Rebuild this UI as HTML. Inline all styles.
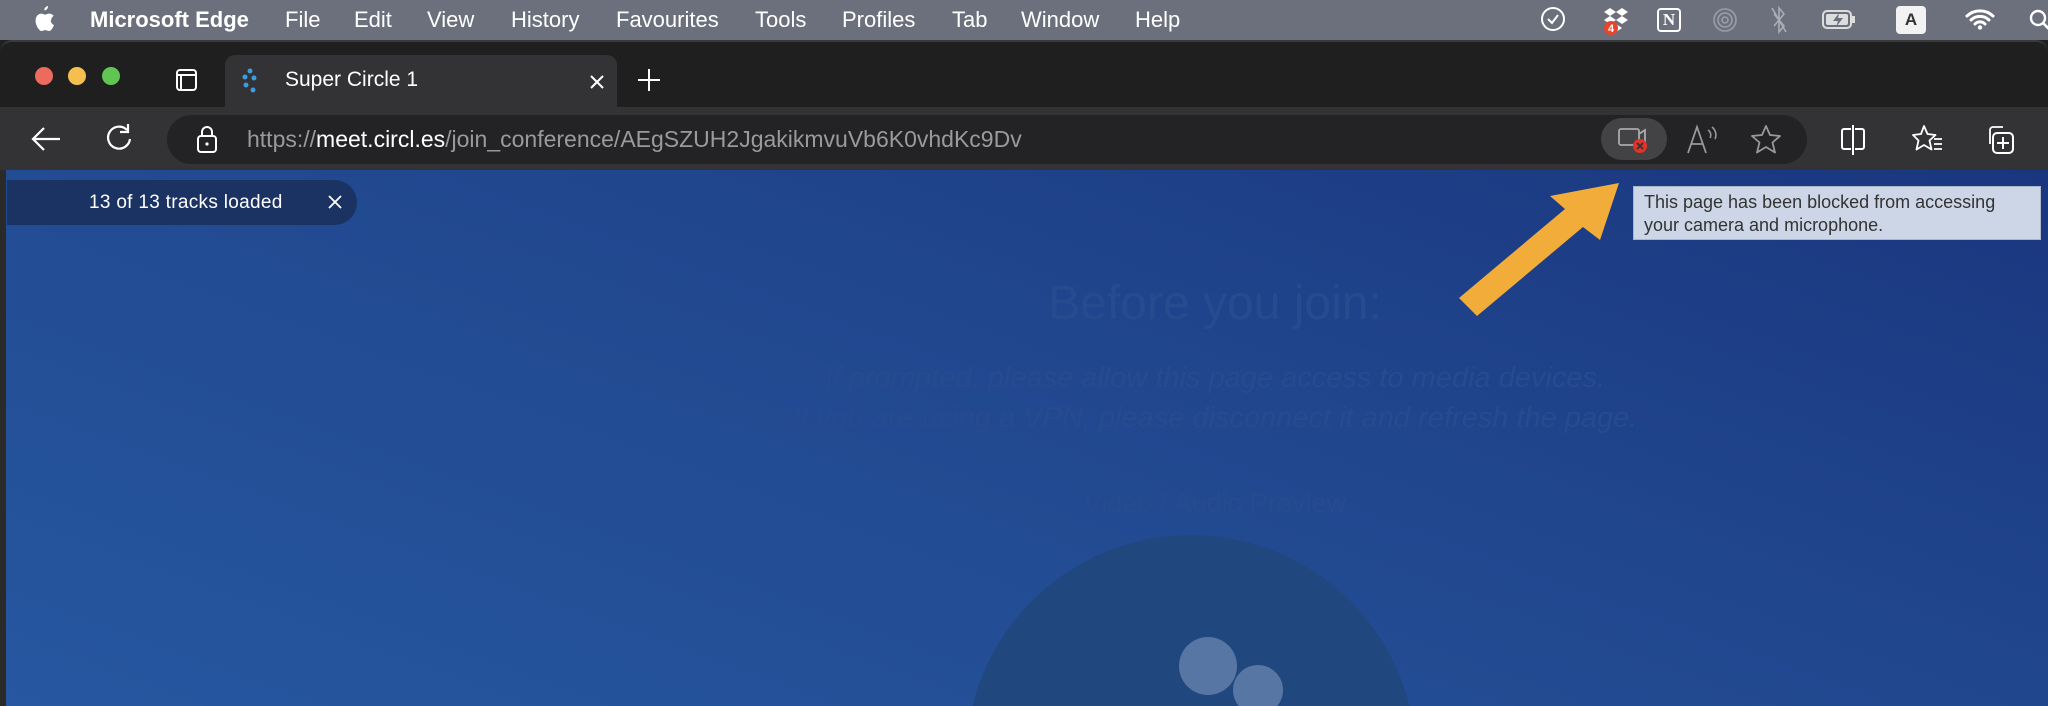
<!DOCTYPE html>
<html style="overflow:hidden;width:2048px;height:706px"><head><meta charset="utf-8"><style>
*{margin:0;padding:0;box-sizing:border-box}
html,body{width:2048px;height:706px;overflow:hidden;background:#1f2024}
body{font-family:"Liberation Sans",sans-serif}
#wrap{position:relative;width:2048px;height:706px;overflow:hidden}
.abs{position:absolute}
#menu{left:0;top:0;width:2048px;height:40px;background:#6b707c}
.mi{position:absolute;top:7px;font-size:22px;color:#fff;white-space:nowrap}
#win{left:0;top:40px;width:2048px;height:666px;background:#1f1f1f;border-radius:12px 12px 0 0;border-top:2px solid #3a3a3c}
#tab{left:225px;top:55px;width:392px;height:53px;background:#333335;border-radius:10px 10px 0 0}
#tool{left:0;top:107px;width:2048px;height:63px;background:#333335}
#url{left:167px;top:115px;width:1640px;height:49px;background:#232325;border-radius:25px}
#content{left:6px;top:170px;width:2042px;height:536px;overflow:hidden;background:linear-gradient(200deg,#1a367f 0%,#21488f 45%,#2657a0 100%)}
#leftb{left:0;top:170px;width:6px;height:536px;background:#2a2a2a}
.fade{position:absolute;color:#274b8f;font-family:"Liberation Sans",sans-serif;white-space:nowrap;text-align:center;font-weight:300}
</style></head><body><div id="wrap">
<div id="menu" class="abs">
<svg class="abs" style="left:33px;top:6px" width="22" height="27" viewBox="0 0 22 27"><path fill="#fff" d="M15 0c.3 2-1.4 4.3-3.6 4.4C11 2.4 13 .3 15 0zM18.2 14.3c0-3 2.4-4.3 2.5-4.4-1.4-2-3.5-2.3-4.2-2.3-1.8-.2-3.5 1-4.4 1-.9 0-2.3-1-3.8-1C6.300 7.700 4.500 8.800 3.500 10.600c-2 3.500-.5 8.700 1.500 11.500 1 1.400 2.100 2.900 3.600 2.900 1.400-.1 2-.9 3.700-.9s2.200.9 3.700.9c1.500 0 2.500-1.400 3.400-2.800 1.100-1.600 1.500-3.100 1.500-3.200-.1 0-3-1.100-3.200-4.700z"/></svg>
<div class="mi" style="left:90px;font-weight:bold">Microsoft Edge</div>
<div class="mi" style="left:285px">File</div>
<div class="mi" style="left:354px">Edit</div>
<div class="mi" style="left:427px">View</div>
<div class="mi" style="left:511px">History</div>
<div class="mi" style="left:616px">Favourites</div>
<div class="mi" style="left:755px">Tools</div>
<div class="mi" style="left:842px">Profiles</div>
<div class="mi" style="left:952px">Tab</div>
<div class="mi" style="left:1021px">Window</div>
<div class="mi" style="left:1135px">Help</div>
<svg class="abs" style="left:1540px;top:6px" width="26" height="26"><circle cx="13" cy="13" r="11" fill="none" stroke="#fff" stroke-width="2"/><path d="M8 13l4 4 6-8" fill="none" stroke="#fff" stroke-width="2"/></svg>
<svg class="abs" style="left:1602px;top:6px" width="28" height="30"><path fill="#fff" d="M8 2l6 4-6 4-6-4zM20 2l6 4-6 4-6-4zM8 10l6 4-6 4-6-4zM20 10l6 4-6 4-6-4zM14 18l6 4-6 4-6-4z"/><circle cx="9" cy="22" r="7" fill="#e8452c"/><text x="9" y="26" font-size="11" fill="#fff" text-anchor="middle" font-family="Liberation Sans" font-weight="bold">4</text></svg>
<div class="abs" style="left:1657px;top:8px;width:24px;height:24px;border:2px solid #fff;border-radius:4px;color:#fff;font:bold 17px 'Liberation Serif',serif;text-align:center;line-height:20px">N</div>
<svg class="abs" style="left:1712px;top:7px" width="26" height="26"><g fill="none" stroke="#9a9ea8" stroke-width="1.6"><circle cx="13" cy="13" r="11"/><circle cx="13" cy="13" r="7"/><circle cx="13" cy="13" r="3"/></g></svg>
<svg class="abs" style="left:1770px;top:6px" width="18" height="28"><path d="M4 8l10 12-5 6V2l5 6L4 20M2 2l14 24" fill="none" stroke="#a9adb6" stroke-width="1.6"/></svg>
<svg class="abs" style="left:1822px;top:10px" width="34" height="20"><rect x="1" y="1" width="28" height="17" rx="4" fill="none" stroke="#ddd" stroke-width="2"/><rect x="4" y="4" width="22" height="11" rx="2" fill="#ddd"/><rect x="30" y="6" width="3" height="7" fill="#ddd"/><path d="M17 3l-6 8h5l-2 6 7-9h-5z" fill="#6b707c"/></svg>
<div class="abs" style="left:1896px;top:6px;width:30px;height:28px;background:#f2f2f2;border-radius:4px;color:#333;font:bold 17px 'Liberation Sans';text-align:center;line-height:28px">A</div>
<svg class="abs" style="left:1965px;top:8px" width="30" height="22"><path d="M2 8a19 19 0 0 1 26 0M6 12a13 13 0 0 1 18 0M10 16a7 7 0 0 1 10 0" fill="none" stroke="#fff" stroke-width="3" stroke-linecap="round"/><circle cx="15" cy="19.5" r="2.2" fill="#fff"/></svg>
<svg class="abs" style="left:2028px;top:8px" width="20" height="24"><circle cx="10" cy="10" r="7" fill="none" stroke="#fff" stroke-width="2.4"/><path d="M15 15l6 6" stroke="#fff" stroke-width="2.6"/></svg>
</div>
<div id="win" class="abs"></div>
<div class="abs" style="left:35px;top:67px;width:18px;height:18px;border-radius:50%;background:#ed6a5e"></div>
<div class="abs" style="left:68px;top:67px;width:18px;height:18px;border-radius:50%;background:#f4bf4f"></div>
<div class="abs" style="left:102px;top:67px;width:18px;height:18px;border-radius:50%;background:#61c554"></div>
<svg class="abs" style="left:175px;top:68px" width="24" height="24"><rect x="2" y="2" width="19" height="20" rx="3" fill="none" stroke="#fff" stroke-width="2"/><path d="M2 7h19M6 7v15" stroke="#fff" stroke-width="2"/></svg>
<div id="tab" class="abs"></div>
<svg class="abs" style="left:241px;top:68px" width="24" height="28"><g fill="#3d9be0"><circle cx="9" cy="3" r="2.5"/><circle cx="4" cy="9" r="2.5"/><circle cx="13" cy="10" r="2.5"/><circle cx="5" cy="17" r="2.5"/><circle cx="12" cy="22" r="2.5"/></g></svg>
<div class="abs" style="left:285px;top:68px;font-size:21px;color:#fff">Super Circle 1</div>
<svg class="abs" style="left:588px;top:73px" width="18" height="18"><path d="M3 3l12 12M15 3L3 15" stroke="#fff" stroke-width="2"/></svg>
<svg class="abs" style="left:636px;top:67px" width="26" height="26"><path d="M13 2v22M2 13h22" stroke="#fff" stroke-width="2"/></svg>
<div id="tool" class="abs"></div>
<svg class="abs" style="left:30px;top:125px" width="32" height="28"><path d="M30 14H3M14 3L3 14l11 11" fill="none" stroke="#fff" stroke-width="2.2"/></svg>
<svg class="abs" style="left:104px;top:122px" width="30" height="32"><path d="M23 8A11 11 0 1 0 26 17" fill="none" stroke="#fff" stroke-width="2.2"/><path d="M24 2v8h-8" fill="none" stroke="#fff" stroke-width="2.2"/></svg>
<div id="url" class="abs"></div>
<svg class="abs" style="left:196px;top:124px" width="22" height="30"><path d="M6 12V8a5 5 0 0 1 10 0v4" fill="none" stroke="#fff" stroke-width="2"/><rect x="2" y="12" width="18" height="16" rx="3" fill="none" stroke="#fff" stroke-width="2"/><circle cx="11" cy="20" r="1.6" fill="#fff"/></svg>
<div class="abs" style="left:247px;top:126px;font-size:23px;color:#9a9a9a;white-space:nowrap">https://<span style="color:#fff">meet.circl.es</span>/join_conference/AEgSZUH2JgakikmvuVb6K0vhdKc9Dv</div>
<div class="abs" style="left:1601px;top:118px;width:66px;height:42px;border-radius:21px;background:#434345"></div>
<svg class="abs" style="left:1618px;top:126px" width="34" height="30"><path d="M3 3h16a2 2 0 0 1 2 2v14H3a2 2 0 0 1-2-2V5a2 2 0 0 1 2-2zM21 8l6-4v12" fill="none" stroke="#aaa" stroke-width="1.8"/><circle cx="22" cy="20" r="7" fill="#e0342a"/><path d="M19 17l6 6M25 17l-6 6" stroke="#333" stroke-width="1.8"/></svg>
<svg class="abs" style="left:1686px;top:124px" width="36" height="30"><path d="M2 29L11 3l9 26M5 20h12" fill="none" stroke="#999" stroke-width="1.8"/><path d="M22 6a6 6 0 0 1 2 8M26 3a10 10 0 0 1 3 12" fill="none" stroke="#999" stroke-width="1.6"/></svg>
<svg class="abs" style="left:1751px;top:124px" width="30" height="30"><path d="M15 2l4 9 10 1-7.5 6.5 2.5 10-9-5.5-9 5.5 2.5-10L1 12l10-1z" fill="none" stroke="#999" stroke-width="1.8" stroke-linejoin="round"/></svg>
<svg class="abs" style="left:1839px;top:124px" width="28" height="32"><path d="M12 5H5a2 2 0 0 0-2 2v16a2 2 0 0 0 2 2h7M16 5h7a2 2 0 0 1 2 2v16a2 2 0 0 1-2 2h-7M14 1v30" fill="none" stroke="#fff" stroke-width="2"/></svg>
<svg class="abs" style="left:1912px;top:124px" width="32" height="30"><path d="M12 2l3.5 8 8 1-6 5.5 2 9-7.5-4.5-7.5 4.5 2-9L1 11l8-1z" fill="none" stroke="#fff" stroke-width="1.8" stroke-linejoin="round"/><path d="M22 15h8M22 20h8M22 25h8" stroke="#fff" stroke-width="1.8"/></svg>
<svg class="abs" style="left:1984px;top:124px" width="32" height="32"><path d="M6 20V6a3 3 0 0 1 3-3h10" fill="none" stroke="#fff" stroke-width="1.8"/><rect x="9" y="9" width="20" height="20" rx="4" fill="none" stroke="#fff" stroke-width="2"/><path d="M19 13v12M13 19h12" stroke="#fff" stroke-width="2"/></svg>
<div id="content" class="abs">
<div class="fade" style="left:909px;top:106px;width:600px;font-size:48px">Before you join:</div>
<div class="fade" style="left:709px;top:192px;width:1000px;font-size:29px;font-style:italic">If prompted, please allow this page access to media devices.</div>
<div class="fade" style="left:689px;top:232px;width:1040px;font-size:29px;font-style:italic">If you are using a VPN, please disconnect it and refresh the page.</div>
<div class="fade" style="left:959px;top:318px;width:500px;font-size:27px">Video / Audio Preview</div>
<div class="abs" style="left:960px;top:365px;width:450px;height:450px;border-radius:50%;background:#21477f"></div>
<div class="abs" style="left:1173px;top:467px;width:58px;height:58px;border-radius:50%;background:#5876a4"></div>
<div class="abs" style="left:1227px;top:495px;width:50px;height:50px;border-radius:50%;background:#5876a4"></div>
</div>
<div id="leftb" class="abs"></div>
<div class="abs" style="left:7px;top:180px;width:350px;height:45px;background:#1b3363;border-radius:0 23px 23px 0"></div>
<div class="abs" style="left:89px;top:192px;font-size:19px;color:#fff;letter-spacing:.3px">13 of 13 tracks loaded</div>
<svg class="abs" style="left:327px;top:194px" width="16" height="16"><path d="M2 2l12 12M14 2L2 14" stroke="#fff" stroke-width="1.8"/></svg>
<svg class="abs" style="left:0;top:0;pointer-events:none" width="2048" height="706"><polygon fill="#f2ac3a" points="1619,183 1600,240 1583,227 1477,316 1459,298 1565,209 1550,196"/></svg>
<div class="abs" style="left:1633px;top:186px;width:408px;height:54px;background:#ccd6e6;border:1px solid #aab6cc;padding:4px 0 0 10px;font-size:18px;line-height:23px;color:#333">This page has been blocked from accessing<br>your camera and microphone.</div>
</div></body></html>
